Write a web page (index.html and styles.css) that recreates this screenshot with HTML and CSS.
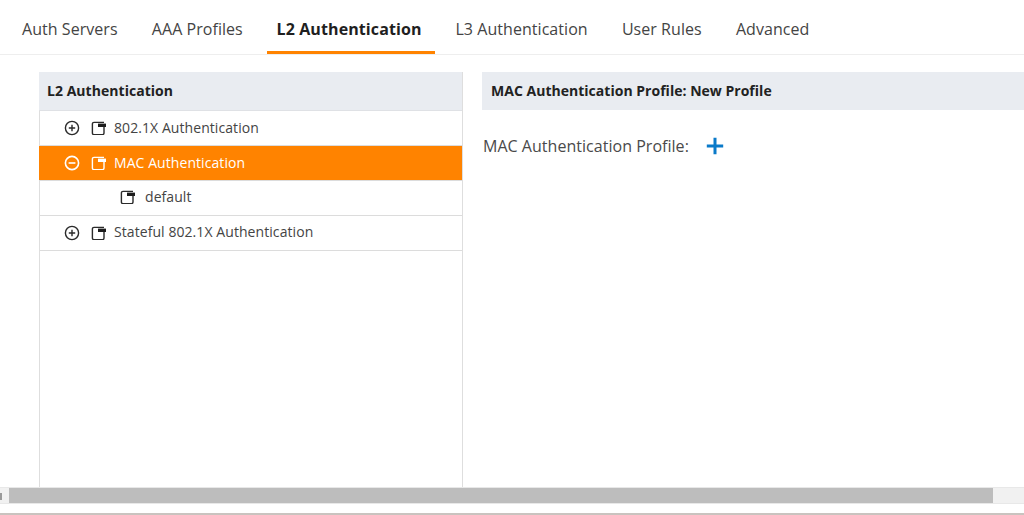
FILE: index.html
```html
<!DOCTYPE html>
<html lang="en">
<head>
<meta charset="utf-8">
<title>L2 Authentication</title>
<link rel="stylesheet" href="styles.css">
</head>
<body>
<svg class="defs" width="0" height="0" aria-hidden="true">
  <defs>
    <symbol id="doc" viewBox="0 0 16 16">
      <path d="M13 8v6a1.6 1.6 0 0 1-1.6 1.6H3a1.6 1.6 0 0 1-1.6-1.6V5a1.6 1.6 0 0 1 1.6-1.6H13" fill="none" stroke="currentColor" stroke-width="1.4"/>
      <rect class="doc-flag" x="7" y="4.6" width="8" height="3.4"/>
    </symbol>
  </defs>
</svg>
<nav class="tabs">
  <a class="tab">Auth Servers</a>
  <a class="tab">AAA Profiles</a>
  <a class="tab active">L2 Authentication</a>
  <a class="tab">L3 Authentication</a>
  <a class="tab">User Rules</a>
  <a class="tab">Advanced</a>
</nav>
<main class="content">
  <section class="tree-panel">
    <h2 class="panel-head">L2 Authentication</h2>
    <ul class="tree">
      <li class="row">
        <svg class="toggle" viewBox="0 0 16 16"><circle cx="8" cy="8" r="6.6" fill="none" stroke="currentColor" stroke-width="1.4"/><path d="M4.8 8h6.4M8 4.8v6.4" stroke="currentColor" stroke-width="1.4"/></svg>
        <svg class="doc"><use href="#doc"/></svg>
        <span>802.1X Authentication</span>
      </li>
      <li class="row selected">
        <svg class="toggle" viewBox="0 0 16 16"><circle cx="8" cy="8" r="6.6" fill="none" stroke="currentColor" stroke-width="1.6"/><path d="M4.6 8h6.8" stroke="currentColor" stroke-width="1.6"/></svg>
        <svg class="doc"><use href="#doc"/></svg>
        <span>MAC Authentication</span>
      </li>
      <li class="row child">
        <svg class="doc"><use href="#doc"/></svg>
        <span>default</span>
      </li>
      <li class="row">
        <svg class="toggle" viewBox="0 0 16 16"><circle cx="8" cy="8" r="6.6" fill="none" stroke="currentColor" stroke-width="1.4"/><path d="M4.8 8h6.4M8 4.8v6.4" stroke="currentColor" stroke-width="1.4"/></svg>
        <svg class="doc"><use href="#doc"/></svg>
        <span>Stateful 802.1X Authentication</span>
      </li>
    </ul>
  </section>
  <section class="detail-panel">
    <h2 class="panel-head">MAC Authentication Profile: New Profile</h2>
    <div class="field">
      <span>MAC Authentication Profile:</span>
      <svg class="add" viewBox="0 0 18 18"><path d="M9 .8v16.4M.8 9h16.4" stroke="currentColor" stroke-width="3" fill="none"/></svg>
    </div>
  </section>
</main>
<div class="scrollbar"><div class="scroll-cap"></div><div class="scroll-thumb"></div></div>
<div class="page-foot"></div>
</body>
</html>
```
FILE: styles.css
```css
* { box-sizing: border-box; }
html, body { margin: 0; height: 515px; overflow: hidden; background: #fff; }
body {
  font-family: "Open Sans", "Liberation Sans", sans-serif;
  font-size: 14px;
  color: #3f3f3f;
  display: flex;
  flex-direction: column;
}
.defs { position: absolute; }
.tabs {
  display: flex;
  height: 55px;
  flex: none;
  padding: 4px 0 0 11px;
  border-bottom: 1px solid #eeeeee;
}
.tab {
  padding: 0 11px;
  margin-right: 12.2px;
  height: 50px;
  line-height: 50px;
  font-size: 16px;
  letter-spacing: .05px;
  color: #444;
  white-space: nowrap;
}
.tab.active {
  padding: 0 13.5px 0 10px;
  margin: 0 9.4px 0 .6px;
  font-weight: 700;
  letter-spacing: .1px;
  color: #1f1f1f;
  border-bottom: 3px solid #ff8300;
}
.content {
  flex: 1;
  min-height: 0;
  display: flex;
  gap: 19px;
  padding: 17px 0 0 39px;
}
.tree-panel {
  width: 424px;
  flex: none;
  border-left: 1px solid #dedede;
  border-right: 1px solid #dedede;
}
.detail-panel { flex: 1; min-width: 0; }
.panel-head {
  margin: 0;
  height: 38px;
  padding: 0 9px;
  line-height: 37px;
  font-size: 14px;
  font-weight: 700;
  letter-spacing: .02px;
  color: #222;
  background: #e9ecf1;
  white-space: nowrap;
}
.tree-panel .panel-head {
  height: 39px;
  margin-left: -1px;
  padding: 0 8px;
  letter-spacing: .04px;
  border-bottom: 1px solid #dfe1e5;
}
.tree { list-style: none; margin: 0; padding: 0; }
.row {
  height: 35px;
  display: flex;
  align-items: center;
  padding: 0 0 2px 24px;
  border-bottom: 1px solid #dcdcdc;
  font-size: 14px;
  letter-spacing: .07px;
  color: #444;
}
.row.selected { background: #ff8300; color: #fff; margin-left: -1px; padding-left: 25px; padding-bottom: 1px; }
.row.child { padding-left: 80px; }
.row.child .doc { margin: 0 9px 2px 0; }
.row.child span, .row:last-child span { margin-bottom: 2px; }
.toggle { width: 16px; height: 16px; flex: none; color: #2a2a2a; margin: 2px 11px 0 0; }
.doc { width: 16px; height: 16px; flex: none; color: #2a2a2a; margin-right: 7px; --flag: #1c1c1c; }
.doc-flag { fill: var(--flag); }
.selected .toggle, .selected .doc { color: #fff; }
.selected .toggle { margin-top: 1px; }
.selected .doc { margin-bottom: 1px; --flag: #fff; }
.field {
  display: flex;
  align-items: center;
  height: 36px;
  margin-top: 18px;
  padding-left: 1px;
  font-size: 16px;
  letter-spacing: .03px;
  color: #4a4a4a;
}
.add { width: 18px; height: 18px; margin: -1px 0 0 17px; color: #0a7ac9; }
.scrollbar {
  flex: none;
  height: 17px;
  display: flex;
  align-items: stretch;
  background: #f1f1f1;
  padding-right: 31px;
  border-top: 1px solid #e8e8e8;
  border-bottom: 1px solid #e8e8e8;
}
.scroll-cap { width: 9px; flex: none; position: relative; }
.scroll-cap::after {
  content: "";
  position: absolute;
  left: 0; top: 5px;
  width: 2px; height: 7px;
  background: #9a9a9a;
}
.scroll-thumb { flex: 1; background: #bdbdbd; }
.page-foot {
  flex: none;
  margin-top: 9px;
  height: 2px;
  background: #c9c3bf;
}
```
